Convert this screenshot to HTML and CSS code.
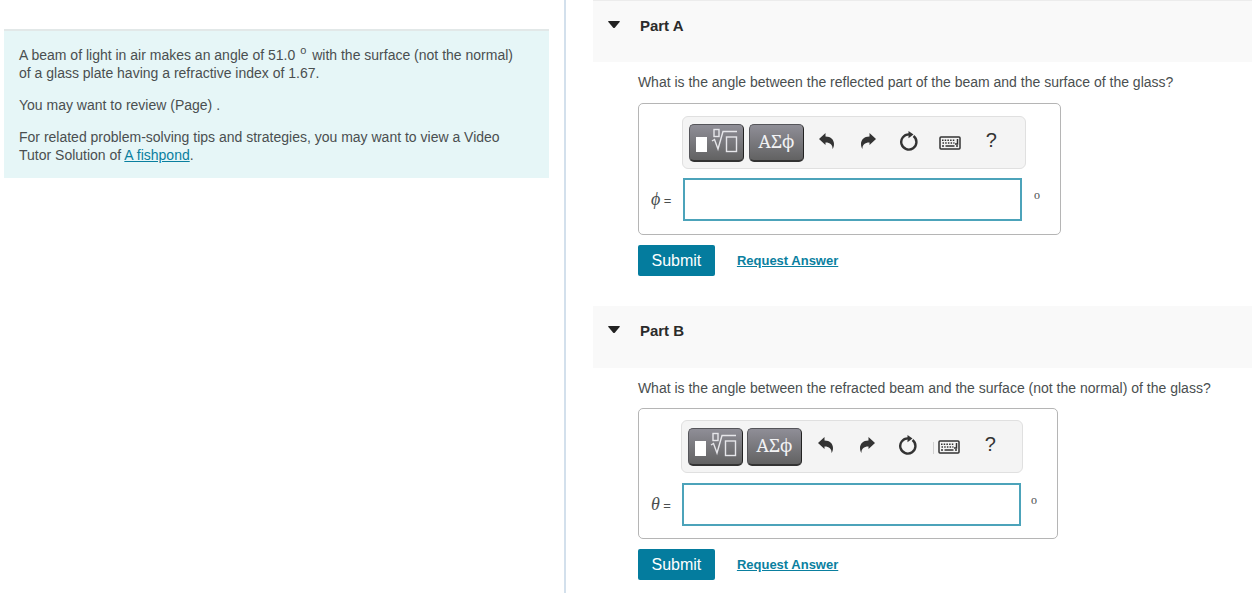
FILE: index.html
```html
<!DOCTYPE html>
<html lang="en">
<head>
    <meta charset="UTF-8">
    <meta name="viewport" content="width=device-width, initial-scale=1.0">
    <title>Reflection and refraction</title>
    <link rel="stylesheet" href="styles.css">
</head>
<body>
    <!-- Shared icons -->
    <svg class="sprite" aria-hidden="true">
        <symbol id="icon-template" viewBox="0 0 44 26">
            <rect x="2" y="9" width="11" height="15" fill="#fff"/>
            <g fill="none" stroke="#e6e6ea" stroke-width="1.4">
                <rect x="20" y="1.500" width="5" height="7"/>
                <path d="M18 13l2.500-1.500 3.500 9.500 5-17.500h14"/>
                <rect x="32.500" y="9" width="10" height="14.500"/>
            </g>
        </symbol>
        <symbol id="icon-undo" viewBox="0 0 16 16">
            <path d="M0 6L6.500 0v3.500c5.500 0 8.500 3.500 8.500 7.500 0 2-.5 3.700-1.500 5 .3-4-2.200-6.500-7-6.500V12z"/>
        </symbol>
        <symbol id="icon-redo" viewBox="0 0 16 16">
            <path d="M16 6L9.500 0v3.500C4 3.500 1 7 1 11c0 2 .5 3.700 1.500 5-.3-4 2.200-6.500 7-6.500V12z"/>
        </symbol>
        <symbol id="icon-reset" viewBox="0 0 18 20">
            <path d="M13.500 5A7.600 7.600 0 1 1 9 3.400" fill="none" stroke="currentColor" stroke-width="2.400"/>
            <path d="M8.500 0l5 3.600-5 3.600z"/>
        </symbol>
        <symbol id="icon-keyboard" viewBox="0 0 22 14">
            <rect x="1" y="1" width="20" height="12" rx="1" fill="none" stroke="currentColor" stroke-width="1.500"/>
            <g fill="none" stroke="currentColor" stroke-width="1.500">
                <path d="M3 4.200h13" stroke-dasharray="1.500 1.200"/>
                <path d="M3.500 7h12" stroke-dasharray="1.500 1.200"/>
                <path d="M3 10h2M6.500 10h9M17 10h2M18.500 3v5H16"/>
            </g>
        </symbol>
        <symbol id="icon-caret" viewBox="0 0 12 7">
            <path d="M.8 0h10.400q1.200 0 .4 1L7 6.400q-1 1-2 0L.4 1Q-.4 0 .8 0z"/>
        </symbol>
    </svg>

    <div class="layout">
        <aside class="intro">
            <div class="problem">
                <p>A beam of light in air makes an angle of 51.0 <span class="degree">o</span> with the surface (not the normal) of a glass plate having a refractive index of 1.67.</p>
                <p>You may want to review (Page) .</p>
                <p>For related problem-solving tips and strategies, you may want to view a Video Tutor Solution of <a href="#">A fishpond</a>.</p>
            </div>
        </aside>

        <main class="parts">
            <section class="part">
                <header class="part-header">
                    <svg class="caret"><use href="#icon-caret"/></svg>
                    <h2>Part A</h2>
                </header>
                <form class="part-body">
                    <p class="question">What is the angle between the reflected part of the beam and the surface of the glass?</p>
                    <div class="answer">
                        <div class="toolbar">
                            <button type="button" class="key" aria-label="Templates"><svg width="44" height="26"><use href="#icon-template"/></svg></button>
                            <button type="button" class="key">ΑΣϕ</button>
                            <button type="button" class="tool" aria-label="Undo"><svg width="16" height="16"><use href="#icon-undo"/></svg></button>
                            <button type="button" class="tool" aria-label="Redo"><svg width="16" height="16"><use href="#icon-redo"/></svg></button>
                            <button type="button" class="tool" aria-label="Reset"><svg width="18" height="20"><use href="#icon-reset"/></svg></button>
                            <button type="button" class="tool" aria-label="Keyboard shortcuts"><svg class="keyboard" width="22" height="14"><use href="#icon-keyboard"/></svg></button>
                            <button type="button" class="tool help">?</button>
                        </div>
                        <label for="phi"><i>ϕ</i> =</label>
                        <input type="text" id="phi">
                        <span class="unit">o</span>
                    </div>
                    <div class="actions">
                        <button type="submit" class="submit">Submit</button>
                        <a href="#">Request Answer</a>
                    </div>
                </form>
            </section>

            <section class="part">
                <header class="part-header">
                    <svg class="caret"><use href="#icon-caret"/></svg>
                    <h2>Part B</h2>
                </header>
                <form class="part-body">
                    <p class="question">What is the angle between the refracted beam and the surface (not the normal) of the glass?</p>
                    <div class="answer compact">
                        <div class="toolbar">
                            <button type="button" class="key" aria-label="Templates"><svg width="44" height="26"><use href="#icon-template"/></svg></button>
                            <button type="button" class="key">ΑΣϕ</button>
                            <button type="button" class="tool" aria-label="Undo"><svg width="16" height="16"><use href="#icon-undo"/></svg></button>
                            <button type="button" class="tool" aria-label="Redo"><svg width="16" height="16"><use href="#icon-redo"/></svg></button>
                            <button type="button" class="tool" aria-label="Reset"><svg width="18" height="20"><use href="#icon-reset"/></svg></button>
                            <button type="button" class="tool divided" aria-label="Keyboard shortcuts"><svg class="keyboard" width="22" height="14"><use href="#icon-keyboard"/></svg></button>
                            <button type="button" class="tool help">?</button>
                        </div>
                        <label for="theta"><i>θ</i> =</label>
                        <input type="text" id="theta">
                        <span class="unit">o</span>
                    </div>
                    <div class="actions">
                        <button type="submit" class="submit">Submit</button>
                        <a href="#">Request Answer</a>
                    </div>
                </form>
            </section>
        </main>
    </div>
</body>
</html>
```
FILE: styles.css
```css
* {
    box-sizing: border-box;
    margin: 0;
    padding: 0;
}

body {
    font-family: "Liberation Sans", Arial, sans-serif;
    font-size: 14px;
    line-height: 18px;
    color: #4a4f50;
    background-color: #fff;
}

a {
    color: #0a7f9f;
}

button {
    font-family: inherit;
    cursor: pointer;
}

.sprite {
    display: none;
}

.layout {
    display: grid;
    grid-template-columns: 45.2% 1fr;
    min-height: 100vh;
}

/* Left column */
.intro {
    padding: 29px 15px 0 4px;
    border-right: 2px solid #d3e0ec;
}

.problem {
    padding: 14px 24px 14px 15px;
    background-color: #e6f6f7;
    border-top: 2px solid #e2e8e8;
}

.problem p + p {
    margin-top: 14px;
}

.degree {
    margin: 0 2px 0 1px;
    font-size: 11px;
    line-height: 1;
    vertical-align: 6px;
}

/* Right column */
.parts {
    padding-left: 27px;
}

.part-header {
    display: flex;
    gap: 20px;
    height: 62px;
    padding: 16px 15px;
    background-color: #f9f9f9;
}

.part:first-child .part-header {
    border-top: 1px solid #ececec;
}

.part-header h2 {
    font-size: 15px;
    line-height: 18px;
    color: #2b2b2b;
}

.caret {
    width: 12px;
    height: 7px;
    margin-top: 4px;
    fill: #222;
}

.part-body {
    padding: 11px 0 30px 45px;
}

.answer {
    display: grid;
    grid-template-columns: 43px 344px 34px;
    row-gap: 9px;
    align-items: center;
    width: fit-content;
    margin-top: 12px;
    padding: 12px 0 13px;
    border: 1px solid #b5b5b5;
    border-radius: 5px;
}

.answer.compact {
    grid-template-columns: 42px 342px 34px;
    row-gap: 10px;
    margin-top: 11px;
    padding: 11px 0 12px;
}

.toolbar {
    grid-column: 2;
    display: flex;
    align-items: center;
    height: 53px;
    padding: 0 6px;
    background-color: #f4f4f4;
    border: 1px solid #e0e0e0;
    border-radius: 6px;
}

.key {
    display: flex;
    align-items: center;
    justify-content: center;
    width: 55px;
    height: 38px;
    margin-right: 5px;
    padding-bottom: 3px;
    font-family: "Noto Serif", "DejaVu Serif", "Liberation Serif", serif;
    font-size: 18px;
    color: #f2f2f4;
    background: linear-gradient(#8f8e97, #626262);
    border: 1px solid #55555a;
    border-right-color: #222;
    border-bottom: 2px solid #333;
    border-radius: 5px;
}

.key + .key {
    margin-right: 3px;
}

.compact .key {
    margin-right: 4px;
}

.tool {
    display: flex;
    align-items: center;
    justify-content: center;
    width: 41px;
    height: 30px;
    padding-bottom: 4px;
    color: #333;
    background: none;
    border: none;
}

.tool svg {
    fill: currentColor;
}

.tool .keyboard {
    margin-top: 4px;
}

.divided {
    background: linear-gradient(#d0d0d0, #d0d0d0) 4px 60% / 1px 12px no-repeat;
}

.help {
    font-size: 20px;
}

.answer label {
    grid-column: 1;
    padding-left: 12px;
    font-size: 13px;
    white-space: nowrap;
}

.answer label i {
    font-family: "Liberation Serif", "Times New Roman", serif;
    font-size: 18px;
}

.answer input {
    width: 339px;
    height: 43px;
    margin-left: 1px;
    padding: 0 8px;
    font-size: 16px;
    border: 2px solid #4ca3ba;
}

.unit {
    padding-left: 8px;
    padding-bottom: 10px;
    font-family: "Liberation Serif", "Times New Roman", serif;
    font-size: 12px;
}

.actions {
    display: flex;
    align-items: center;
    gap: 22px;
    margin-top: 10px;
    font-size: 13px;
    font-weight: bold;
}

.submit {
    width: 77px;
    height: 31px;
    font-size: 16px;
    color: #fff;
    background-color: #047c9e;
    border: none;
    border-radius: 2px;
}
```
